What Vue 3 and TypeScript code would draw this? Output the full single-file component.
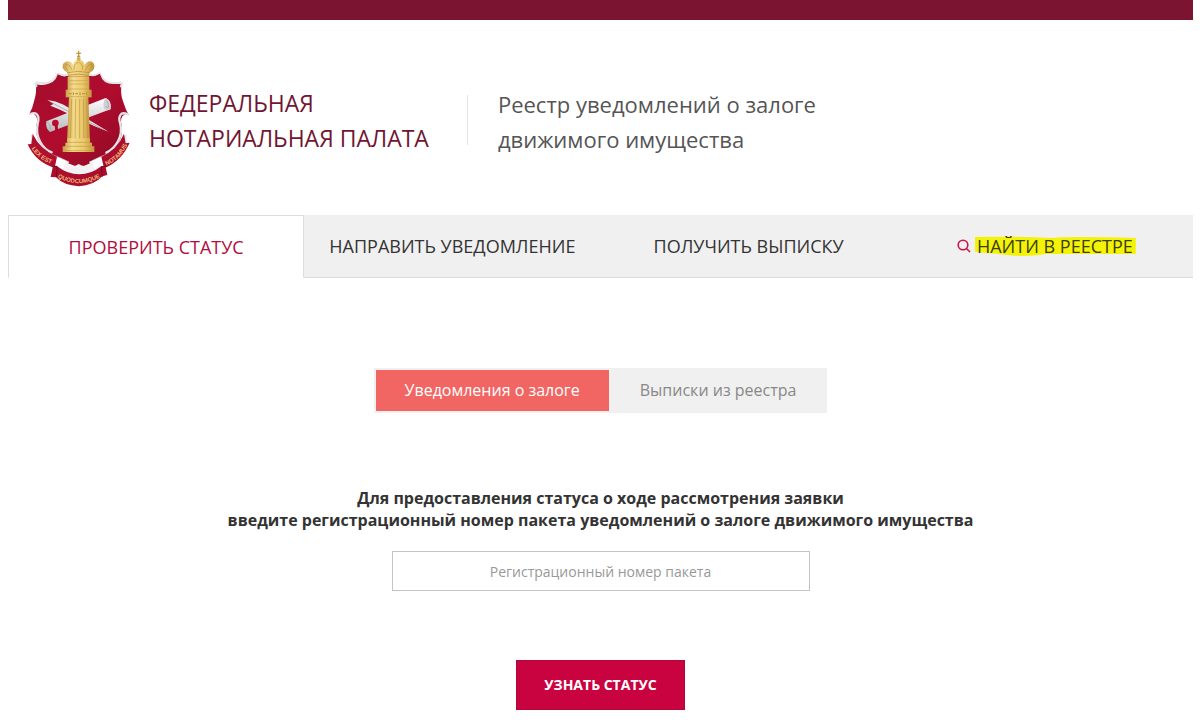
<script setup lang="ts">
import { ref } from 'vue'

interface NavItem {
  label: string
  active?: boolean
  search?: boolean
}

const navItems: NavItem[] = [
  { label: 'ПРОВЕРИТЬ СТАТУС', active: true },
  { label: 'НАПРАВИТЬ УВЕДОМЛЕНИЕ' },
  { label: 'ПОЛУЧИТЬ ВЫПИСКУ' },
  { label: 'НАЙТИ В РЕЕСТРЕ', search: true },
]

const modes: string[] = ['Уведомления о залоге', 'Выписки из реестра']
const currentMode = ref(0)
const packageNumber = ref('')
</script>

<template>
  <div class="page">
    <div class="topbar"></div>
    <header class="header">
      <svg class="crest" viewBox="72 21 318 420" aria-hidden="true">
        <defs>
          <linearGradient id="gold" x1="0" x2="1" y1="0" y2="0">
            <stop offset="0" stop-color="#c79d42" />
            <stop offset=".3" stop-color="#f3dc8e" />
            <stop offset=".65" stop-color="#ecca6c" />
            <stop offset="1" stop-color="#c1933a" />
          </linearGradient>
          <linearGradient id="red" x1="0" x2="1" y1="0" y2="1">
            <stop offset="0" stop-color="#a30d2c" />
            <stop offset=".5" stop-color="#b00c2e" />
            <stop offset="1" stop-color="#8b0a23" />
          </linearGradient>
          <linearGradient id="paper" x1="0" x2="0" y1="0" y2="1">
            <stop offset="0" stop-color="#ffffff" />
            <stop offset="1" stop-color="#b9b9bd" />
          </linearGradient>
          <path id="ribbon-left" d="M91 316 Q110 353 160 371" />
          <path id="ribbon-mid" d="M164 404 Q236 449 310 404" />
          <path id="ribbon-right" d="M308 378 Q363 360 387 300" />
        </defs>

        <path
          d="M167 95 Q180 106 204 105 H266 Q291 107 304 94 Q309 120 330 126 Q350 131 365 128 Q360 157 369 181 Q376 204 386 222 Q364 215 363 242 C371 278 362 300 345 320 C330 345 300 349 276 365 Q250 373 237 384 Q222 371 198 365 C170 349 142 340 126 316 C109 292 104 266 112 240 Q110 213 88 218 Q98 202 103 178 Q111 151 107 130 Q133 136 149 126 Q164 115 167 95Z"
          fill="url(#red)"
        />
        <g fill="none" stroke="#e4e3e7" stroke-width="7" stroke-linecap="round">
          <path d="M201 101 C178 110 174 82 169 102 Q160 132 116 124 Q103 124 109 135" />
          <path d="M270 101 C295 108 298 82 304 100 Q313 132 357 124 Q370 124 363 136" />
          <path d="M91 219 C111 210 120 225 113 248 C104 288 128 324 155 334" />
          <path d="M382 220 C362 210 353 226 361 249 C370 286 347 322 319 335" />
        </g>
        <g fill="none" stroke="#ffffff" stroke-width="4" stroke-linecap="round">
          <path d="M202 96 C181 102 173 84 168 97 Q159 127 115 120" />
          <path d="M269 97 C290 104 300 83 305 97 Q315 126 357 120" />
        </g>

        <path d="M142 177 Q166 179 191 191 L326 272 L284 256 L177 205 L151 194 L161 188Z" fill="#e7e7e9" />
        <path d="M151 183 L313 267" stroke="#929198" stroke-width="2" />
        <path d="M139 241 L317 171 Q336 181 331 205 L150 273 Q136 263 139 241Z" fill="url(#paper)" />
        <path d="M317 171 Q306 184 313 205 Q324 211 332 204 Q337 180 317 171Z" fill="#d0cfd3" />
        <path d="M318 179 Q326 183 326 198 Q319 203 317 195" fill="none" stroke="#97969b" stroke-width="2" />
        <path d="M139 241 Q154 247 150 273" fill="none" stroke="#a3a2a8" stroke-width="2" />
        <circle cx="166" cy="246" r="10" fill="#bd0b2f" />
        <path d="M164 252 L166 272 L174 266 L173 250Z" fill="#b10a29" />

        <path d="M207 166 H265 L270 303 H201Z" fill="url(#gold)" />
        <g stroke="#bd943f" stroke-width="2">
          <path d="M215 174 L211 300 M227 174 L225 300 M239 174 V300 M250 174 L252 300 M260 174 L263 300" />
        </g>
        <path d="M203 108 H268 V146 H275 V169 H197 V146 H203Z" fill="url(#gold)" />
        <path d="M203 119 H268 M203 129 H268 M203 144 H268 M198 167 H274" stroke="#c9a24c" stroke-width="2" />
        <path d="M207 158 h8 M220 154 v8 M226 158 h8 M240 154 v8 M246 158 h8 M260 154 v8" stroke="#b58935" stroke-width="3" />
        <path d="M202 292 H270 V305 H276 V316 H283 V333 H188 V316 H196 V305 H202Z" fill="url(#gold)" />
        <path d="M201 304 H272 M194 316 H279 M189 329 H282" stroke="#c39840" stroke-width="2" />

        <path
          d="M205 107 L201 94 Q184 86 189 69 Q198 56 213 64 Q219 68 220 74 Q220 57 236 57 Q252 57 254 73 Q260 60 273 61 Q287 67 282 83 Q278 92 269 95 L267 107Z"
          fill="url(#gold)"
        />
        <path d="M203 89 Q192 77 199 69 Q211 70 217 89 M222 87 Q221 67 235 64 Q249 67 248 87 M256 89 Q262 70 273 69 Q281 78 268 89" fill="none" stroke="#ba9142" stroke-width="2" />
        <path d="M202 95 Q235 87 269 95 M204 103 Q236 96 267 103" fill="none" stroke="#b08337" stroke-width="2" />
        <path d="M236 29 V58 M229 37 H243 M231 46 H241" stroke="#c69b3e" stroke-width="4" />
        <circle cx="236" cy="54" r="6" fill="#d5af51" />

        <path d="M94 282 Q108 318 151 339 Q179 349 207 363 L190 386 Q124 368 94 323Z" fill="#ffffff" stroke="#d9d7dc" stroke-width="2" />
        <path d="M378 282 Q364 318 321 339 Q294 350 268 363 L281 387 Q350 365 378 323Z" fill="#ffffff" stroke="#d9d7dc" stroke-width="2" />
        <path d="M197 361 Q216 384 236 369 Q259 384 277 361 L283 384 Q257 405 237 402 Q210 402 190 383Z" fill="#f2f1f3" />
        <path d="M98 278 Q119 325 171 347 L164 381 Q106 363 83 310 L94 309Z" fill="#b01030" />
        <path d="M372 278 Q352 326 304 347 L312 382 Q365 360 389 305 L377 307Z" fill="#ab0e2d" />
        <path d="M159 374 L171 376 Q203 400 237 400 Q274 400 304 376 L316 374 L322 402 L307 406 Q281 434 237 436 Q191 433 168 409 L152 408Z" fill="#aa0f2d" />
        <path d="M156 376 L171 376 L169 408 M319 376 L304 377 L307 407" fill="none" stroke="#7d081e" stroke-width="3" />
        <g class="motto">
          <text><textPath href="#ribbon-left" startOffset="50%">LEX EST</textPath></text>
          <text><textPath href="#ribbon-mid" startOffset="50%">QUODCUMQUE</textPath></text>
          <text><textPath href="#ribbon-right" startOffset="50%">NOTAMUS</textPath></text>
        </g>
      </svg>
      <div class="org">ФЕДЕРАЛЬНАЯ<br />НОТАРИАЛЬНАЯ ПАЛАТА</div>
      <div class="divider"></div>
      <h1 class="subtitle">Реестр уведомлений о залоге<br />движимого имущества</h1>
    </header>

    <nav class="nav">
      <a v-for="item in navItems" :key="item.label" href="#" class="nav-item" :class="{ active: item.active }">
        <svg v-if="item.search" class="search" viewBox="0 0 14 14" aria-hidden="true">
          <circle cx="6" cy="6" r="4.8" />
          <path d="M9.4 9.5 L13 13" />
        </svg>
        <span :class="{ marked: item.search }">
          <svg v-if="item.search" class="marker" viewBox="0 0 162 20" preserveAspectRatio="none" aria-hidden="true">
            <path d="M0 1 Q35 0 78 2 Q95 0 162 2 V18 H72 Q48 22 24 18 Q12 17 0 16Z" />
          </svg>
          <span class="nav-label">{{ item.label }}</span>
        </span>
      </a>
    </nav>

    <main class="content">
      <div class="modes">
        <button
          v-for="(mode, index) in modes"
          :key="mode"
          type="button"
          class="mode"
          :class="{ selected: currentMode === index }"
          :aria-pressed="currentMode === index"
          @click="currentMode = index"
        >
          {{ mode }}
        </button>
      </div>
      <form class="form" @submit.prevent>
        <label class="prompt" for="package-number">
          Для предоставления статуса о ходе рассмотрения заявки<br />
          введите регистрационный номер пакета уведомлений о залоге движимого имущества
        </label>
        <input id="package-number" v-model="packageNumber" class="field" type="text" placeholder="Регистрационный номер пакета" />
        <button type="submit" class="submit">УЗНАТЬ СТАТУС</button>
      </form>
    </main>
  </div>
</template>

<style>
body {
  margin: 0;
  background: #ffffff;
}
</style>

<style scoped>
.page {
  margin: 0 7px 0 8px;
  font-family: 'Open Sans', 'Noto Sans', sans-serif;
  color: #333333;
}
.page * {
  box-sizing: border-box;
}
.topbar {
  height: 20px;
  background: #7a1430;
}
.header {
  display: flex;
  align-items: center;
  min-height: 195px;
  padding: 0 16px;
}
.crest {
  flex: none;
  width: 106px;
  height: 140px;
}
.motto {
  fill: #efb878;
  font-family: 'Liberation Sans', sans-serif;
  font-size: 18px;
  font-weight: 700;
  text-anchor: middle;
}
.org {
  margin-left: 19px;
  padding-top: 6px;
  font-size: 23px;
  line-height: 35px;
  color: #701532;
  white-space: nowrap;
}
.divider {
  width: 1px;
  height: 50px;
  margin: 4px 30px 0 38px;
  background: #e4e4e4;
}
.subtitle {
  margin: 0;
  padding-top: 8px;
  font-size: 22px;
  font-weight: 400;
  line-height: 35px;
  color: #555555;
}
.nav {
  display: grid;
  grid-template-columns: repeat(4, 1fr);
}
.nav-item {
  display: flex;
  align-items: center;
  justify-content: center;
  gap: 6px;
  height: 63px;
  background: #f0f0f0;
  border-bottom: 1px solid #dcdcdc;
  font-size: 18px;
  font-weight: 500;
  line-height: 24px;
  color: #333333;
  text-decoration: none;
  white-space: nowrap;
}
.nav-item.active {
  background: #ffffff;
  border: 1px solid #dcdcdc;
  border-bottom-color: #ffffff;
  color: #b00c3c;
}
.search {
  width: 14px;
  height: 14px;
  fill: none;
  stroke: #c8144a;
  stroke-width: 1.6;
}
.marked {
  position: relative;
  color: #3d3d10;
}
.marker {
  position: absolute;
  top: 2px;
  left: -2px;
  width: calc(100% + 5px);
  height: 20px;
  fill: #f3f30a;
}
.nav-label {
  position: relative;
}
.content {
  display: flex;
  flex-direction: column;
  align-items: center;
  padding-top: 90px;
}
.modes {
  display: flex;
  padding: 1px;
  background: #f0f0f0;
}
.mode {
  height: 43px;
  padding: 0 29px 2px;
  border: 1px solid #f0f0f0;
  background: #f0f0f0;
  font: 400 16px/24px 'Open Sans', 'Noto Sans', sans-serif;
  color: #888888;
}
.mode.selected {
  background: #f16563;
  color: #ffffff;
}
.form {
  display: flex;
  flex-direction: column;
  align-items: center;
  margin-top: 74px;
}
.prompt {
  font-size: 16px;
  font-weight: 700;
  line-height: 22px;
  text-align: center;
}
.field {
  width: 418px;
  height: 40px;
  margin-top: 20px;
  padding: 0 12px;
  border: 1px solid #c4c4c4;
  background: #ffffff;
  font: 400 14px/20px 'Open Sans', 'Noto Sans', sans-serif;
  color: #333333;
  text-align: center;
}
.field::placeholder {
  color: #999999;
  opacity: 1;
}
.submit {
  height: 50px;
  margin-top: 69px;
  padding: 0 27px;
  border: 1px solid #b3053a;
  background: #c8033f;
  font: 700 14px/20px 'Open Sans', 'Noto Sans', sans-serif;
  color: #ffffff;
}
</style>
